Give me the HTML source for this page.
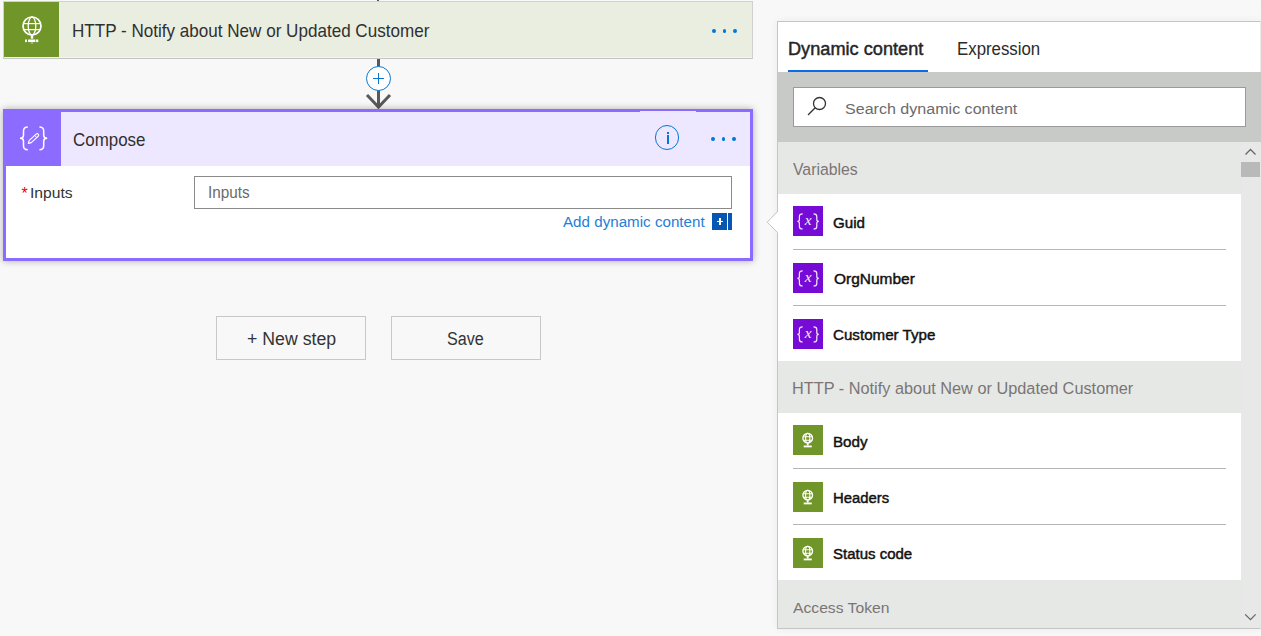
<!DOCTYPE html>
<html><head><meta charset="utf-8">
<style>
html,body{margin:0;padding:0;}
body{width:1261px;height:636px;overflow:hidden;background:#f8f8f8;position:relative;font-family:"Liberation Sans",sans-serif;}
.a{position:absolute;}
.t{position:absolute;white-space:nowrap;line-height:1;transform-origin:0 0;}
.dot{position:absolute;width:3.8px;height:3.8px;border-radius:50%;background:#0078d4;}
</style></head><body>


<!-- connector line top -->
<div class="a" style="left:377px;top:0;width:2px;height:2px;background:#555;"></div>

<!-- HTTP card -->
<div class="a" style="left:3px;top:1px;width:748px;height:56px;border:1px solid #d0d0d0;border-bottom-color:#c4c4c4;background:#eaeee0;"></div>
<div class="a" style="left:4px;top:57px;width:748px;height:1px;background:#f3f2f4;"></div>
<div class="a" style="left:4px;top:2px;width:55px;height:55px;background:#709529;"></div>
<div class="dot" style="left:712.3px;top:29.1px;"></div>
<div class="dot" style="left:722.7px;top:29.1px;"></div>
<div class="dot" style="left:733.2px;top:29.1px;"></div>

<!-- connector -->
<div class="a" style="left:377px;top:59px;width:3px;height:49px;background:#595959;"></div>
<div class="a" style="left:366px;top:66px;width:23px;height:23px;border:1px solid #0a78d2;border-radius:50%;background:#fff;"></div>
<div class="a" style="left:373px;top:77.6px;width:11px;height:1.6px;background:#0a78d2;"></div>
<div class="a" style="left:377.7px;top:72.9px;width:1.6px;height:11px;background:#0a78d2;"></div>
<svg class="a" style="left:360px;top:88px;" width="40" height="24"><polyline points="7,7 18.5,19 30,7" fill="none" stroke="#595959" stroke-width="3"/></svg>

<!-- Compose card -->
<div class="a" style="left:3px;top:109px;width:744px;height:146px;border:3px solid #8c6cff;background:#fff;box-shadow:0 0 7px rgba(0,0,0,0.3);"></div>
<div class="a" style="left:6px;top:112px;width:744px;height:54px;background:#ede8ff;"></div>
<div class="a" style="left:6px;top:112px;width:55px;height:54px;background:#8c6cff;"></div>
<div class="a" style="left:640px;top:111px;width:56px;height:1px;background:#ede8ff;"></div>
<div class="a" style="left:654.6px;top:125px;width:22.8px;height:22.8px;border:1.6px solid #0078d4;border-radius:50%;"></div>
<div class="a" style="left:666.5px;top:132px;width:2px;height:2px;background:#0078d4;"></div>
<div class="a" style="left:666.5px;top:135px;width:2px;height:9px;background:#0078d4;"></div>
<div class="dot" style="left:711.1px;top:137px;"></div>
<div class="dot" style="left:721.6px;top:137px;"></div>
<div class="dot" style="left:732.1px;top:137px;"></div>

<div class="t" style="left:21.5px;top:186px;font-size:16px;color:#e00;">*</div>
<div class="a" style="left:194px;top:176px;width:536px;height:31px;border:1px solid #8a8a8a;background:#fff;"></div>
<div class="a" style="left:712px;top:213px;width:15px;height:17px;background:#0756b2;"></div>
<div class="a" style="left:716.8px;top:220.7px;width:6.5px;height:1.5px;background:#fff;"></div>
<div class="a" style="left:719.3px;top:218.2px;width:1.5px;height:6.5px;background:#fff;"></div>
<div class="a" style="left:728px;top:213px;width:4px;height:17px;background:#0756b2;"></div>

<!-- buttons -->
<div class="a" style="left:216px;top:316px;width:148px;height:42px;border:1px solid #c8c8c8;"></div>
<div class="a" style="left:391px;top:316px;width:148px;height:42px;border:1px solid #c8c8c8;"></div>

<!-- Right panel -->
<div class="a" style="left:777px;top:21px;width:482px;height:606px;border:1px solid #c6c5c4;border-right-color:#ececec;background:#fff;box-shadow:0 0 8px rgba(0,0,0,0.06);"></div>
<div class="a" style="left:788px;top:70px;width:140px;height:2px;background:#0b6be6;"></div>
<div class="a" style="left:778px;top:72px;width:483px;height:70px;background:#c8cac8;"></div>
<div class="a" style="left:793px;top:87px;width:451px;height:38px;border:1px solid #9a9a9a;background:#fff;"></div>
<svg class="a" style="left:805px;top:94px;" width="24" height="24"><circle cx="14.5" cy="9.5" r="6" fill="none" stroke="#333" stroke-width="1.3"/><line x1="10.2" y1="13.8" x2="3" y2="21" stroke="#333" stroke-width="1.3"/></svg>

<!-- list -->
<div class="a" style="left:778px;top:142px;width:463px;height:52px;background:#e6e8e6;"></div>

<div class="a" style="left:793px;top:249px;width:433px;height:1px;background:#b6b6b6;"></div>
<div class="a" style="left:793px;top:305px;width:433px;height:1px;background:#b6b6b6;"></div>

<div class="a" style="left:778px;top:361px;width:463px;height:52px;background:#e6e8e6;"></div>

<div class="a" style="left:793px;top:468px;width:433px;height:1px;background:#b6b6b6;"></div>
<div class="a" style="left:793px;top:524px;width:433px;height:1px;background:#b6b6b6;"></div>

<div class="a" style="left:778px;top:580px;width:463px;height:48px;background:#e6e8e6;"></div>

<!-- var icons -->
<div class="a" style="left:793px;top:206px;width:30px;height:30px;background:#770bd6;"></div>
<div class="a" style="left:793px;top:263px;width:30px;height:30px;background:#770bd6;"></div>
<div class="a" style="left:793px;top:319px;width:30px;height:30px;background:#770bd6;"></div>

<!-- globe icons -->
<div class="a" style="left:793px;top:425px;width:30px;height:30px;background:#709529;"></div>
<div class="a" style="left:793px;top:482px;width:30px;height:30px;background:#709529;"></div>
<div class="a" style="left:793px;top:538px;width:30px;height:30px;background:#709529;"></div>

<!-- scrollbar -->
<div class="a" style="left:1241px;top:142px;width:20px;height:486px;background:#e8e8e8;"></div>
<div class="a" style="left:1241px;top:162px;width:19px;height:15px;background:#b9b9b9;"></div>


<!-- icon defs -->
<svg width="0" height="0" style="position:absolute">
<defs>
<symbol id="globe" viewBox="-12 -11 24 30">
<g fill="none" stroke="#fff">
<circle cx="0" cy="0" r="9" stroke-width="1.7"/>
<ellipse cx="0" cy="0" rx="3.8" ry="9" stroke-width="1.3"/>
<line x1="-8.6" y1="-2.4" x2="8.6" y2="-2.4" stroke-width="1.2"/>
<line x1="-8.2" y1="3.6" x2="8.2" y2="3.6" stroke-width="1.2"/>
</g>
<g fill="#fff">
<rect x="-1.2" y="9.3" width="2.4" height="3.4"/>
<rect x="-6.9" y="13.5" width="1.8" height="2.6"/>
<rect x="-3.9" y="13.5" width="7.3" height="2.6"/>
<rect x="4.1" y="13.5" width="2.2" height="2.6"/>
<rect x="-0.8" y="16.3" width="1.6" height="1.6" opacity="0.5"/>
</g>
</symbol>
<symbol id="globes" viewBox="-12 -11 24 30">
<g fill="none" stroke="#fff">
<circle cx="0" cy="0" r="8.6" stroke-width="2.4"/>
<ellipse cx="0" cy="0" rx="3.8" ry="8.6" stroke-width="2"/>
<line x1="-8.6" y1="-2.4" x2="8.6" y2="-2.4" stroke-width="1.8"/>
<line x1="-8.2" y1="3.6" x2="8.2" y2="3.6" stroke-width="1.8"/>
</g>
<g fill="#fff">
<rect x="-1.6" y="9.3" width="3.2" height="4"/>
<rect x="-7.2" y="13.2" width="14.4" height="3.2"/>
</g>
</symbol>
<symbol id="varx" viewBox="0 0 30 30">
<g fill="none" stroke="#fff" stroke-width="1.2" opacity="0.92">
<path d="M9.7,7.9 C7.4,7.9 6.4,8.8 6.4,10.6 L6.4,13.4 C6.4,14.7 5.6,15.4 4.4,15.4 C5.6,15.4 6.4,16.1 6.4,17.4 L6.4,20.4 C6.4,22.2 7.4,23 9.7,23"/>
<path d="M20.5,7.9 C22.8,7.9 23.8,8.8 23.8,10.6 L23.8,13.4 C23.8,14.7 24.6,15.4 25.8,15.4 C24.6,15.4 23.8,16.1 23.8,17.4 L23.8,20.4 C23.8,22.2 22.8,23 20.5,23"/>
</g>
<text x="15.1" y="18.9" font-family="Liberation Serif" font-style="italic" font-size="15.5" text-anchor="middle" fill="#fff" opacity="0.92">x</text>
</symbol>
</defs>
</svg>
<svg class="a" style="left:19.9px;top:14.7px;" width="24" height="30"><use href="#globe"/></svg>
<svg class="a" style="left:6px;top:112px;" width="55" height="54">
<g fill="none" stroke="#fff" stroke-width="1.5">
<path d="M21.8,15 C18.6,15 17.5,16.4 17.5,19 L17.5,23.6 C17.5,25.5 16.2,26.3 14,26.3 C16.2,26.3 17.5,27.1 17.5,29 L17.5,33.7 C17.5,36.3 18.6,37.7 21.8,37.7"/>
<path d="M33.4,15 C36.6,15 37.7,16.4 37.7,19 L37.7,23.6 C37.7,25.5 39,26.3 41.2,26.3 C39,26.3 37.7,27.1 37.7,29 L37.7,33.7 C37.7,36.3 36.6,37.7 33.4,37.7"/>
</g>
<g transform="rotate(-43 22.3 31.4)">
<path d="M22.3,31.4 L25,29.9 L34.4,29.9 A1.5,1.5 0 0 1 34.4,32.9 L25,32.9 Z" fill="none" stroke="#fff" stroke-width="1.1" stroke-linejoin="round"/>
<line x1="32.4" y1="29.9" x2="32.4" y2="32.9" stroke="#fff" stroke-width="0.9"/>
</g>
</svg>
<svg class="a" style="left:793px;top:206px;" width="30" height="30"><use href="#varx"/></svg>
<svg class="a" style="left:793px;top:263px;" width="30" height="30"><use href="#varx"/></svg>
<svg class="a" style="left:793px;top:319px;" width="30" height="30"><use href="#varx"/></svg>
<svg class="a" style="left:801.13px;top:432.04px;" width="13.44" height="16.8"><use href="#globes"/></svg>
<svg class="a" style="left:801.13px;top:489.04px;" width="13.44" height="16.8"><use href="#globes"/></svg>
<svg class="a" style="left:801.13px;top:545.04px;" width="13.44" height="16.8"><use href="#globes"/></svg>

<!-- search icon, chevrons, callout -->
<svg class="a" style="left:1241px;top:142px;" width="19" height="20"><polyline points="4.5,12.5 9.5,7.5 14.5,12.5" fill="none" stroke="#666" stroke-width="1.3"/></svg>
<svg class="a" style="left:1241px;top:606px;" width="19" height="20"><polyline points="4.2,8.4 9.5,13.6 14.6,8.4" fill="none" stroke="#666" stroke-width="1.3"/></svg>
<svg class="a" style="left:760px;top:205px;" width="20" height="34"><polygon points="18,6.5 7.2,17.2 18,28" fill="#fff" stroke="none"/><polyline points="17.5,6.5 7.2,17.2 17.5,27.5" fill="none" stroke="#c4c4c4" stroke-width="1"/><rect x="17.5" y="7.5" width="2" height="19.5" fill="#fff"/></svg>
<div class="t" style="left:71.98px;top:21.77px;font-size:18.55px;color:#303030;transform:scaleX(0.9212);">HTTP - Notify about New or Updated Customer</div>
<div class="t" style="left:72.60px;top:130.53px;font-size:18.84px;color:#303030;transform:scaleX(0.8987);">Compose</div>
<div class="t" style="left:29.58px;top:185.47px;font-size:15.36px;color:#333333;transform:scaleX(1.0200);">Inputs</div>
<div class="t" style="left:207.92px;top:185.22px;font-size:15.65px;color:#6b6b6b;transform:scaleX(0.9780);">Inputs</div>
<div class="t" style="left:563.00px;top:214.47px;font-size:15.36px;color:#1f7ed6;transform:scaleX(0.9874);">Add dynamic content</div>
<div class="t" style="left:246.62px;top:330.14px;font-size:18.12px;color:#333333;transform:scaleX(0.9787);">+ New step</div>
<div class="t" style="left:447.18px;top:330.63px;font-size:17.54px;color:#333333;transform:scaleX(0.9211);">Save</div>
<div class="t" style="left:787.58px;top:41.39px;font-size:17.83px;-webkit-text-stroke:0.45px #252525;color:#252525;transform:scaleX(1.0189);">Dynamic content</div>
<div class="t" style="left:957.35px;top:40.51px;font-size:17.68px;color:#2b2b2b;transform:scaleX(0.9518);">Expression</div>
<div class="t" style="left:844.55px;top:101.47px;font-size:15.36px;color:#6b6b6b;transform:scaleX(1.0457);">Search dynamic content</div>
<div class="t" style="left:793.30px;top:161.98px;font-size:15.94px;color:#7a7574;transform:scaleX(0.9923);">Variables</div>
<div class="t" style="left:832.52px;top:215.96px;font-size:14.78px;-webkit-text-stroke:0.45px #111111;color:#111111;transform:scaleX(1.0250);">Guid</div>
<div class="t" style="left:833.70px;top:270.71px;font-size:15.07px;-webkit-text-stroke:0.45px #111111;color:#111111;transform:scaleX(1.0278);">OrgNumber</div>
<div class="t" style="left:833.40px;top:326.71px;font-size:15.07px;-webkit-text-stroke:0.45px #111111;color:#111111;transform:scaleX(1.0050);">Customer Type</div>
<div class="t" style="left:791.96px;top:381.22px;font-size:15.65px;color:#7a7574;transform:scaleX(1.0423);">HTTP - Notify about New or Updated Customer</div>
<div class="t" style="left:832.57px;top:434.96px;font-size:14.78px;-webkit-text-stroke:0.45px #111111;color:#111111;transform:scaleX(1.0273);">Body</div>
<div class="t" style="left:832.63px;top:490.47px;font-size:15.36px;-webkit-text-stroke:0.45px #111111;color:#111111;transform:scaleX(0.9667);">Headers</div>
<div class="t" style="left:833.27px;top:547.08px;font-size:14.64px;-webkit-text-stroke:0.45px #111111;color:#111111;transform:scaleX(1.0250);">Status code</div>
<div class="t" style="left:793.20px;top:600.35px;font-size:15.51px;color:#7a7574;transform:scaleX(1.0117);">Access Token</div>

</body></html>
